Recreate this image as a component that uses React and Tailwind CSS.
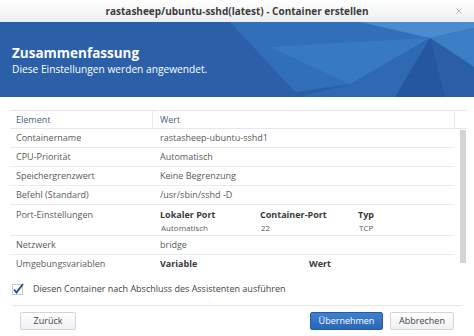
import { X } from "lucide-react";

const rows = [
  ["Containername", "rastasheep-ubuntu-sshd1"],
  ["CPU-Priorität", "Automatisch"],
  ["Speichergrenzwert", "Keine Begrenzung"],
  ["Befehl (Standard)", "/usr/sbin/sshd -D"],
];

const HeaderArt = () => (
  <svg className="absolute inset-0" width="474" height="75" viewBox="0 0 474 75">
    <rect width="474" height="75" fill="#2c63ab" />
    <polygon points="0,0 230,0 300,75 0,75" fill="#2b60a8" />
    <polygon points="230,0 400,0 430,16 350,62 300,75" fill="#3170b8" />
    <polygon points="270,25 430,16 350,62" fill="#3a7fc6" opacity="0.7" />
    <polygon points="360,0 474,0 474,6 430,16" fill="#4a8ccf" />
    <polygon points="430,16 474,6 474,45" fill="#3b7ec4" />
    <polygon points="430,16 474,45 474,75 445,75" fill="#2a5ea6" />
    <polygon points="430,16 445,75 395,75" fill="#2556a0" />
    <polygon points="350,62 430,16 395,75 300,75" fill="#2f69b2" />
    <polygon points="260,75 350,62 300,75" fill="#2a5fa6" />
  </svg>
);

export default function App() {
  return (
    <div
      className="w-[474px] h-[336px] bg-white overflow-hidden flex flex-col text-[#5a5a5a]"
      style={{ fontFamily: '"Open Sans", "Liberation Sans", sans-serif' }}
    >
      {/* title bar */}
      <div className="h-[22px] shrink-0 relative flex items-center justify-center bg-gradient-to-b from-white to-[#eceef1]">
        <span className="text-[10px] font-bold text-[#3c3c3c]">
          rastasheep/ubuntu-sshd(latest) - Container erstellen
        </span>
        <X className="absolute right-[10px] top-[6px] text-[#a0a0a0]" size={10} strokeWidth={1.5} />
      </div>

      {/* blue header */}
      <div className="h-[75px] shrink-0 relative overflow-hidden">
        <HeaderArt />
        <div className="relative pl-3 pt-[23px] text-white">
          <div className="text-[13.5px] font-bold leading-[17px]">Zusammenfassung</div>
          <div className="text-[10.2px] leading-[14px]">Diese Einstellungen werden angewendet.</div>
        </div>
      </div>

      {/* table */}
      <div className="pl-[10px] pr-[7px] pt-[13px] text-[9px]">
        <div className="flex h-[19px] border-t border-b border-[#e3e8ef] text-[#4b6282]">
          <div className="w-[143px] pl-[6px] flex items-center border-r border-[#e8ebef]">Element</div>
          <div className="w-[302px] pl-[7px] flex items-center border-r border-[#e8ebef]">Wert</div>
          <div className="flex-1" />
        </div>
        <div className="flex">
          <div className="w-[445px]">
            {rows.map(([k, v]) => (
              <div key={k} className="flex h-[19px] items-center border-b border-[#ebebeb]">
                <div className="w-[143px] pl-[6px]">{k}</div>
                <div className="pl-[7px]">{v}</div>
              </div>
            ))}
            <div className="flex h-[31px] border-b border-[#ebebeb]">
              <div className="w-[143px] pl-[6px] pt-[3px]">Port-Einstellungen</div>
              <div className="pl-[7px] pt-[3px] flex-1">
                <div className="grid grid-cols-[100px_98px_60px] font-bold text-[#3a3a3a] leading-[13px]">
                  <span>Lokaler Port</span>
                  <span>Container-Port</span>
                  <span>Typ</span>
                </div>
                <div className="grid grid-cols-[100px_98px_60px] text-[8px] leading-[14px] pl-[1px]">
                  <span>Automatisch</span>
                  <span>22</span>
                  <span>TCP</span>
                </div>
              </div>
            </div>
            <div className="flex h-[19px] items-center border-b border-[#ebebeb]">
              <div className="w-[143px] pl-[6px]">Netzwerk</div>
              <div className="pl-[7px]">bridge</div>
            </div>
            <div className="flex h-[18px] items-start pt-[2px]">
              <div className="w-[143px] pl-[6px]">Umgebungsvariablen</div>
              <div className="pl-[7px] grid grid-cols-[149px_60px] font-bold text-[#3a3a3a]">
                <span>Variable</span>
                <span>Wert</span>
              </div>
            </div>
          </div>
          <div className="ml-[5px] mt-[1px] w-[6px] h-[133px] bg-[#d4d4d4]" />
        </div>
      </div>

      {/* checkbox */}
      <div className="flex items-center gap-[9px] pl-[12px] mt-[9px] text-[9px] text-[#444]">
        <svg width="12" height="12" viewBox="0 0 12 12">
          <rect x="0.5" y="1.5" width="10" height="10" fill="#fff" stroke="#c8ccd2" />
          <path d="M2 6.5 L4.5 9.5 L11 1" fill="none" stroke="#1f4e8c" strokeWidth="1.8" />
        </svg>
        <span>Diesen Container nach Abschluss des Assistenten ausführen</span>
      </div>

      {/* footer */}
      <div className="mx-[12px] mt-[9px] border-t border-[#e6e6e6] pt-[6px] flex items-center text-[9px]">
        <button className="ml-[8px] w-[56px] h-[18px] rounded-[2px] border border-[#d2d6dc] bg-gradient-to-b from-white to-[#eef0f3] text-[#444]">
          Zurück
        </button>
        <div className="flex-1" />
        <button className="w-[73px] h-[18px] rounded-[2px] border border-[#235ca6] bg-gradient-to-b from-[#3f80cf] to-[#2a67b5] text-white">
          Übernehmen
        </button>
        <button className="ml-[7px] mr-[8px] w-[64px] h-[18px] rounded-[2px] border border-[#d2d6dc] bg-gradient-to-b from-white to-[#eef0f3] text-[#444]">
          Abbrechen
        </button>
      </div>
    </div>
  );
}
